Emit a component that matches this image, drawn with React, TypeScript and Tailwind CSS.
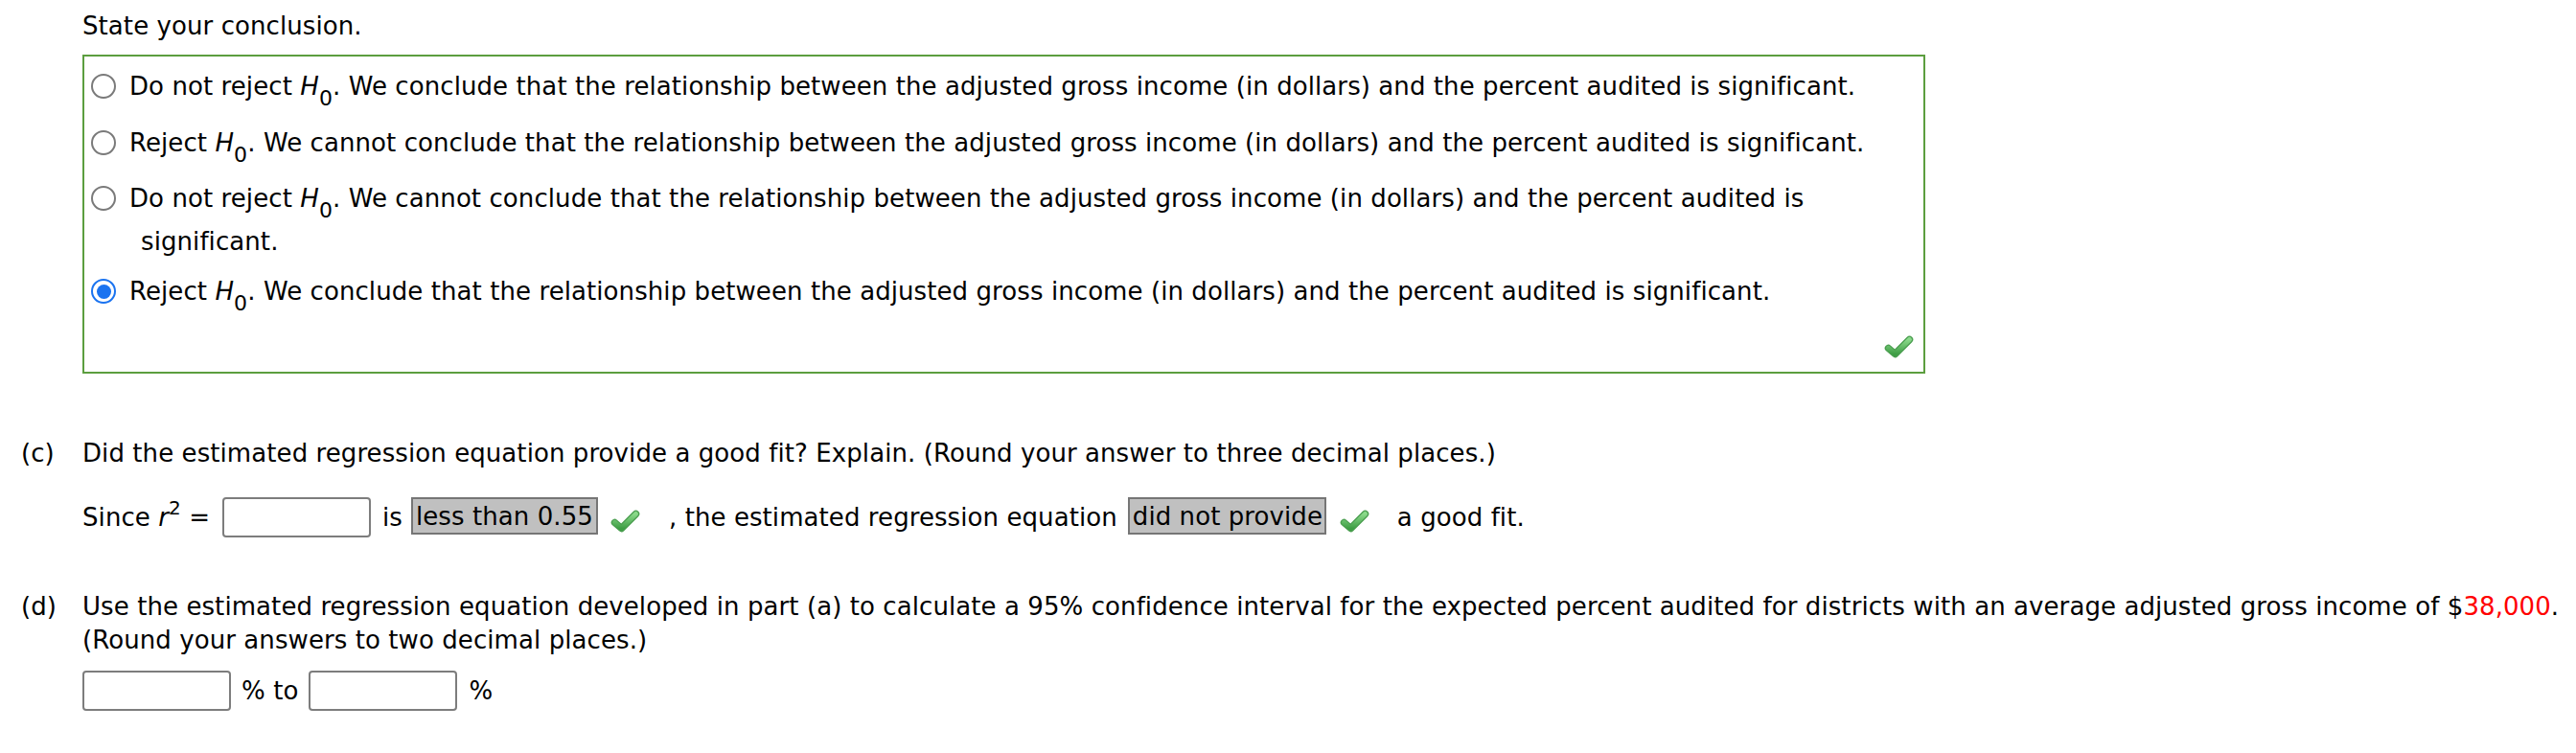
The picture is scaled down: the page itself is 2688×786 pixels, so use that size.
import React from 'react';

type Option = {
    lead: string;
    rest: React.ReactNode;
    selected?: boolean;
    mt: string;
};

const options: Option[] = [
    {
        lead: 'Do not reject',
        rest: 'We conclude that the relationship between the adjusted gross income (in dollars) and the percent audited is significant.',
        mt: 'mt-0',
    },
    {
        lead: 'Reject',
        rest: 'We cannot conclude that the relationship between the adjusted gross income (in dollars) and the percent audited is significant.',
        mt: 'mt-[14px]',
    },
    {
        lead: 'Do not reject',
        rest: (
            <>
                We cannot conclude that the relationship between the adjusted gross income (in dollars) and the percent audited is
                <br />
                significant.
            </>
        ),
        mt: 'mt-[13px]',
    },
    {
        lead: 'Reject',
        rest: 'We conclude that the relationship between the adjusted gross income (in dollars) and the percent audited is significant.',
        selected: true,
        mt: 'mt-[7px]',
    },
];

function CheckIcon({ id }: { id: string }) {
    return (
        <svg width="31" height="24" viewBox="0 0 31 24">
            <defs>
                <linearGradient id={id} x1="0" y1="0" x2="0" y2="1">
                    <stop offset="0" stopColor="#8ad98a" />
                    <stop offset="1" stopColor="#3f9e45" />
                </linearGradient>
            </defs>
            <path d="M4.5 13.5 L11.5 19.5 L26.5 4.5" fill="none" stroke="#4a9d4f" strokeWidth="7.5" strokeLinecap="round" strokeLinejoin="round" />
            <path d="M4.5 13.5 L11.5 19.5 L26.5 4.5" fill="none" stroke={`url(#${id})`} strokeWidth="5" strokeLinecap="round" strokeLinejoin="round" />
        </svg>
    );
}

function Radio({ selected }: { selected?: boolean }) {
    if (selected) {
        return (
            <span className="mt-[9px] ml-[7px] w-[26px] h-[26px] shrink-0 rounded-full border-2 border-[#1a73f0] bg-white flex items-center justify-center">
                <span className="w-[15px] h-[15px] rounded-full bg-[#1a73f0]" />
            </span>
        );
    }
    return <span className="mt-[9px] ml-[7px] w-[26px] h-[26px] shrink-0 rounded-full border-2 border-[#7a7a7a] bg-white" />;
}

function H0() {
    return (
        <>
            <i>H</i>
            <span className="relative top-[11px] text-[22px] leading-none">0</span>
        </>
    );
}

function AnswerBox({ w, ml = '' }: { w: string; ml?: string }) {
    return <span className={`${w} ${ml} h-[42px] shrink-0 rounded-[4px] border-2 border-[#7d7d7d] bg-white`} />;
}

export default function App() {
    return (
        <div className="w-[2688px] h-[786px] bg-white text-black font-['DejaVu_Sans',sans-serif] text-[26px] tracking-[0.08px] overflow-hidden">
            <div className="pl-[86px] pt-[9px]">
                <p className="leading-[36px]">State your conclusion.</p>

                <div className="mt-[12px] w-[1923px] h-[333px] border-2 border-[#5c9e3f] flex flex-col pt-[9px]">
                    {options.map((opt, idx) => (
                        <div key={idx} className={`flex items-start ${opt.mt}`}>
                            <Radio selected={opt.selected} />
                            <div className="ml-[14px] pl-[12px] indent-[-12px] leading-[45px] whitespace-nowrap">
                                {opt.lead} <H0 />. {opt.rest}
                            </div>
                        </div>
                    ))}
                    <div className="mt-auto flex justify-end pr-[10px] pb-[14px]">
                        <CheckIcon id="chk-a" />
                    </div>
                </div>
            </div>

            <div className="mt-[65px] pl-[22px] flex">
                <span className="w-[64px] leading-[36px]">(c)</span>
                <div>
                    <p className="leading-[36px]">Did the estimated regression equation provide a good fit? Explain. (Round your answer to three decimal places.)</p>
                    <div className="mt-[28px] flex items-start h-[42px] leading-[42px] whitespace-nowrap">
                        <span className="w-[146px]">
                            Since <i>r</i>
                            <span className="relative top-[-12px] text-[20px] leading-none">2</span> =
                        </span>
                        <AnswerBox w="w-[155px]" />
                        <span className="ml-[12px]">is</span>
                        <span className="ml-[9px] w-[195px] h-[39px] border-2 border-[#767676] bg-[#c0c0c0] pl-[3px] leading-[37px]">less than 0.55</span>
                        <span className="ml-[13px] mt-[13px]">
                            <CheckIcon id="chk-b" />
                        </span>
                        <span className="ml-[30px]">, the estimated regression equation</span>
                        <span className="ml-[11px] w-[207px] h-[39px] border-2 border-[#767676] bg-[#c0c0c0] pl-[3px] leading-[37px]">did not provide</span>
                        <span className="ml-[14px] mt-[13px]">
                            <CheckIcon id="chk-c" />
                        </span>
                        <span className="ml-[29px]">a good fit.</span>
                    </div>
                </div>
            </div>

            <div className="mt-[55px] pl-[22px] flex">
                <span className="w-[64px] leading-[35px]">(d)</span>
                <div>
                    <p className="leading-[35px] whitespace-nowrap">
                        Use the estimated regression equation developed in part (a) to calculate a 95% confidence interval for the expected percent audited for districts with an average adjusted gross income of $<span className="text-[#ff0000]">38,000</span>.
                        <br />
                        (Round your answers to two decimal places.)
                    </p>
                    <div className="mt-[14px] flex items-start h-[42px] leading-[42px]">
                        <AnswerBox w="w-[155px]" />
                        <span className="ml-[11px]">% to</span>
                        <AnswerBox w="w-[155px]" ml="ml-[11px]" />
                        <span className="ml-[12px]">%</span>
                    </div>
                </div>
            </div>
        </div>
    );
}
